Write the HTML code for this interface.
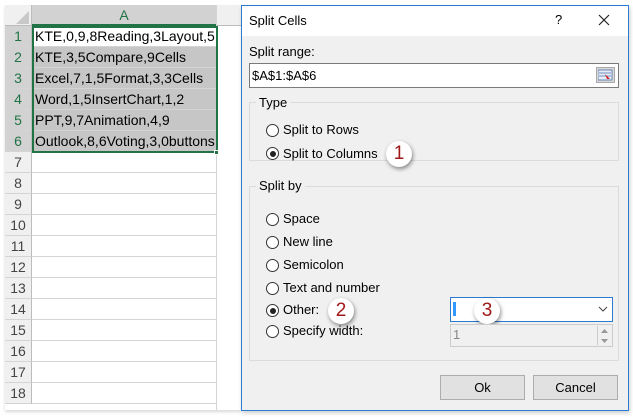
<!DOCTYPE html>
<html><head><style>
*{margin:0;padding:0;box-sizing:border-box}
body{width:633px;height:417px;background:#fff;position:relative;overflow:hidden;font-family:"Liberation Sans","DejaVu Sans",sans-serif;font-size:12px;color:#000}
.a{position:absolute}
.rh{position:absolute;left:5px;width:27px;height:21px;text-align:center;line-height:21px;font-size:14px;color:#444;background:#f0f0f0;border-bottom:1px solid #d4d4d4;border-right:1px solid #bcbcbc}
.cell{position:absolute;left:32px;width:184px;height:21px;border-bottom:1px solid #d4d4d4;line-height:21px;font-size:14px;padding-left:3px;white-space:nowrap}
.rd{position:absolute;width:13px;height:13px;border:1px solid #333;border-radius:50%;background:#fff}
.rd.on::after{content:"";position:absolute;left:2.5px;top:2.5px;width:6px;height:6px;border-radius:50%;background:#222}
.lb{position:absolute;font-size:13px;color:#000}
.badge{position:absolute;width:26px;height:26px;border-radius:50%;background:#fff;box-shadow:1px 2px 4px rgba(0,0,0,.45);color:#a01818;font-size:19px;text-align:center;line-height:26px}
.grp{position:absolute;border:1px solid #dcdcdc}
.btn{position:absolute;height:25px;border:1px solid #adadad;background:#e1e1e1;text-align:center;line-height:23px;font-size:13px}
</style></head><body>
<div class="a" style="left:5px;top:5px;width:236px;height:405px;background:#fff;box-shadow:0 2px 3px rgba(0,0,0,.15)"></div>
<div class="a" style="left:5px;top:5px;width:27px;height:21px;background:#f0f0f0;border-right:1px solid #bcbcbc;border-bottom:1px solid #bcbcbc"></div>
<svg class="a" style="left:15px;top:10px" width="15" height="15"><path d="M14 1V14H1Z" fill="#c8c8c8"/></svg>
<div class="a" style="left:32px;top:5px;width:209px;height:21px;background:#f0f0f0;border-bottom:1px solid #bcbcbc"></div>
<div class="a" style="left:32px;top:5px;width:184px;height:21px;background:#d2d2d2;border-bottom:2px solid #217346;color:#217346;text-align:center;line-height:20px;font-size:14px">A</div>
<div class="a" style="left:216px;top:5px;width:1px;height:405px;background:#d4d4d4"></div>

<div class="rh" style="top:26px;background:#d2d2d2;color:#217346">1</div><div class="rh" style="top:47px;background:#d2d2d2;color:#217346">2</div><div class="rh" style="top:68px;background:#d2d2d2;color:#217346">3</div><div class="rh" style="top:89px;background:#d2d2d2;color:#217346">4</div><div class="rh" style="top:110px;background:#d2d2d2;color:#217346">5</div><div class="rh" style="top:131px;background:#d2d2d2;color:#217346">6</div>
<div class="rh" style="top:152px">7</div><div class="rh" style="top:173px">8</div><div class="rh" style="top:194px">9</div><div class="rh" style="top:215px">10</div><div class="rh" style="top:236px">11</div><div class="rh" style="top:257px">12</div><div class="rh" style="top:278px">13</div><div class="rh" style="top:299px">14</div><div class="rh" style="top:320px">15</div><div class="rh" style="top:341px">16</div><div class="rh" style="top:362px">17</div><div class="rh" style="top:383px">18</div>
<div class="a" style="left:32px;top:26px;width:184px;height:126px;background:#c6c6c6"></div>
<div class="a" style="left:32px;top:26px;width:184px;height:21px;background:#fff"></div>
<div class="cell" style="top:26px">KTE,0,9,8Reading,3Layout,5</div>
<div class="cell" style="top:47px">KTE,3,5Compare,9Cells</div>
<div class="cell" style="top:68px">Excel,7,1,5Format,3,3Cells</div>
<div class="cell" style="top:89px">Word,1,5InsertChart,1,2</div>
<div class="cell" style="top:110px">PPT,9,7Animation,4,9</div>
<div class="cell" style="top:131px;overflow:visible">Outlook,8,6Voting,3,0buttons</div>
<div class="cell" style="top:152px"></div><div class="cell" style="top:173px"></div><div class="cell" style="top:194px"></div><div class="cell" style="top:215px"></div><div class="cell" style="top:236px"></div><div class="cell" style="top:257px"></div><div class="cell" style="top:278px"></div><div class="cell" style="top:299px"></div><div class="cell" style="top:320px"></div><div class="cell" style="top:341px"></div><div class="cell" style="top:362px"></div><div class="cell" style="top:383px"></div>
<div class="a" style="left:32px;top:26px;width:186px;height:127px;border:2px solid #217346"></div>
<div class="a" style="left:214px;top:150px;width:5px;height:5px;background:#217346;border:1px solid #fff"></div>

<div class="a" style="left:241px;top:5px;width:388px;height:406px;border:1px solid #2b7bd3;background:#f0f0f0;box-shadow:1px 2px 4px rgba(0,0,0,.2)"></div>
<div class="a" style="left:242px;top:6px;width:386px;height:30px;background:#fff"></div>
<div class="lb" style="left:249px;top:13px">Split Cells</div>
<div class="lb" style="left:555px;top:12px;font-size:13px">?</div>
<svg class="a" style="left:598px;top:14px" width="12" height="12"><path d="M1 1L11 11M11 1L1 11" stroke="#222" stroke-width="1.2"/></svg>
<div class="lb" style="left:249px;top:44px">Split range:</div>
<div class="a" style="left:249px;top:63px;width:370px;height:25px;background:#fff;border:1px solid #7a7a7a"></div>
<div class="lb" style="left:252px;top:68px">$A$1:$A$6</div>
<div class="a" style="left:596px;top:67px;width:19px;height:16px;background:#d8d8d8;border:1px solid #aaa"></div>
<svg class="a" style="left:598px;top:69px" width="16" height="12"><rect x="0" y="1" width="14" height="10" fill="#e8eef8" stroke="#4a6fa5" stroke-width=".8"/><path d="M1 4H13M1 7H13" stroke="#4a6fa5" stroke-width=".8"/><path d="M7 5L12 10L9 10Z" fill="#d02020"/></svg>

<div class="grp" style="left:249px;top:102px;width:370px;height:59px"></div>
<div class="lb" style="left:256px;top:95px;background:#f0f0f0;padding:0 3px">Type</div>
<div class="rd" style="left:266px;top:124px"></div><div class="lb" style="left:283px;top:122px">Split to Rows</div>
<div class="rd on" style="left:266px;top:147px"></div><div class="lb" style="left:283px;top:146px">Split to Columns</div>
<div class="badge" style="left:386px;top:141px">1</div>

<div class="grp" style="left:249px;top:186px;width:370px;height:175px"></div>
<div class="lb" style="left:256px;top:178px;background:#f0f0f0;padding:0 3px">Split by</div>
<div class="rd" style="left:266px;top:213px"></div><div class="lb" style="left:283px;top:211px">Space</div>
<div class="rd" style="left:266px;top:236px"></div><div class="lb" style="left:283px;top:234px">New line</div>
<div class="rd" style="left:266px;top:259px"></div><div class="lb" style="left:283px;top:257px">Semicolon</div>
<div class="rd" style="left:266px;top:282px"></div><div class="lb" style="left:283px;top:280px">Text and number</div>
<div class="rd on" style="left:266px;top:304px"></div><div class="lb" style="left:283px;top:302px">Other:</div>
<div class="rd" style="left:266px;top:325px"></div><div class="lb" style="left:283px;top:323px">Specify width:</div>
<div class="badge" style="left:328px;top:298px">2</div>
<div class="a" style="left:450px;top:297px;width:163px;height:25px;background:#fff;border:1px solid #2b7bd3"></div>
<div class="a" style="left:453px;top:302px;width:3px;height:14px;background:#3399ff"></div>
<svg class="a" style="left:598px;top:306px" width="10" height="6"><path d="M1 1L5 5L9 1" stroke="#444" fill="none"/></svg>
<div class="badge" style="left:474px;top:298px">3</div>
<div class="a" style="left:450px;top:324px;width:163px;height:23px;background:#f0f0f0;border:1px solid #ccc"></div>
<div class="lb" style="left:453px;top:327px;color:#888">1</div>
<div class="a" style="left:597px;top:326px;width:14px;height:19px;border-left:1px solid #ccc"></div>
<svg class="a" style="left:600px;top:328px" width="9" height="16"><path d="M1 5L4.5 1L8 5Z M1 11L4.5 15L8 11Z" fill="#999"/></svg>

<div class="btn" style="left:440px;top:375px;width:85px">Ok</div>
<div class="btn" style="left:533px;top:375px;width:85px">Cancel</div>
</body></html>
